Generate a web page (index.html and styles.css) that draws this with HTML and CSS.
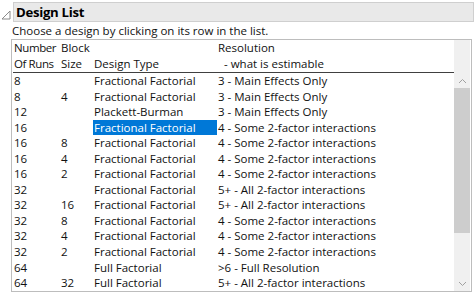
FILE: index.html
```html
<!DOCTYPE html>
<html>
<head>
<meta charset="utf-8">
<link rel="stylesheet" href="styles.css">
</head>
<body>
<div class="panel">
  <div class="outline">
    <svg class="tri" width="10" height="10" viewBox="0 0 10 10"><path d="M9 1 L9 9 L1 9 Z" fill="none" stroke="#8a8a8a" stroke-width="1"/></svg>
    <div class="titlebar">Design List</div>
  </div>
  <div class="content">
    <div class="hint">Choose a design by clicking on its row in the list.</div>
    <div class="listbox">
      <div class="table">
        <div class="head">
          <div class="row h">
            <span class="c1">Number</span><span class="c2">Block</span><span class="c3"></span><span class="c4">Resolution</span>
          </div>
          <div class="row h">
            <span class="c1">Of Runs</span><span class="c2">Size</span><span class="c3">Design Type</span><span class="c4">&nbsp;&nbsp;- what is estimable</span>
          </div>
        </div>
        <div class="body">
          <div class="row"><span class="c1">8</span><span class="c2"></span><span class="c3">Fractional Factorial</span><span class="c4">3 - Main Effects Only</span></div>
          <div class="row"><span class="c1">8</span><span class="c2">4</span><span class="c3">Fractional Factorial</span><span class="c4">3 - Main Effects Only</span></div>
          <div class="row"><span class="c1">12</span><span class="c2"></span><span class="c3">Plackett-Burman</span><span class="c4">3 - Main Effects Only</span></div>
          <div class="row"><span class="c1">16</span><span class="c2"></span><span class="c3 sel">Fractional Factorial</span><span class="c4">4 - Some 2-factor interactions</span></div>
          <div class="row"><span class="c1">16</span><span class="c2">8</span><span class="c3">Fractional Factorial</span><span class="c4">4 - Some 2-factor interactions</span></div>
          <div class="row"><span class="c1">16</span><span class="c2">4</span><span class="c3">Fractional Factorial</span><span class="c4">4 - Some 2-factor interactions</span></div>
          <div class="row"><span class="c1">16</span><span class="c2">2</span><span class="c3">Fractional Factorial</span><span class="c4">4 - Some 2-factor interactions</span></div>
          <div class="row"><span class="c1">32</span><span class="c2"></span><span class="c3">Fractional Factorial</span><span class="c4">5+ - All 2-factor interactions</span></div>
          <div class="row"><span class="c1">32</span><span class="c2">16</span><span class="c3">Fractional Factorial</span><span class="c4">5+ - All 2-factor interactions</span></div>
          <div class="row"><span class="c1">32</span><span class="c2">8</span><span class="c3">Fractional Factorial</span><span class="c4">4 - Some 2-factor interactions</span></div>
          <div class="row"><span class="c1">32</span><span class="c2">4</span><span class="c3">Fractional Factorial</span><span class="c4">4 - Some 2-factor interactions</span></div>
          <div class="row"><span class="c1">32</span><span class="c2">2</span><span class="c3">Fractional Factorial</span><span class="c4">4 - Some 2-factor interactions</span></div>
          <div class="row"><span class="c1">64</span><span class="c2"></span><span class="c3">Full Factorial</span><span class="c4">&gt;6 - Full Resolution</span></div>
          <div class="row"><span class="c1">64</span><span class="c2">32</span><span class="c3">Full Factorial</span><span class="c4">5+ - All 2-factor interactions</span></div>
        </div>
      </div>
      <div class="scrollbar">
        <div class="spacer"></div>
        <div class="arrow">
          <svg width="9" height="6" viewBox="0 0 9 6"><path d="M1 5 L4.5 1.5 L8 5" fill="none" stroke="#a0a0a0" stroke-width="1"/></svg>
        </div>
        <div class="thumb"></div>
        <div class="track"></div>
        <div class="arrow">
          <svg width="9" height="6" viewBox="0 0 9 6"><path d="M1 1 L4.5 4.5 L8 1" fill="none" stroke="#a0a0a0" stroke-width="1"/></svg>
        </div>
      </div>
    </div>
  </div>
</div>
</body>
</html>
```
FILE: styles.css
```css
html, body {
  margin: 0;
  padding: 0;
  background: #ffffff;
}
body {
  width: 474px;
  height: 293px;
  overflow: hidden;
  font-family: "Open Sans", "Noto Sans", sans-serif;
  font-size: 11.5px;
  color: #111;
}
.panel {
  padding-top: 2px;
}
.outline {
  display: flex;
  align-items: flex-end;
}
.tri {
  width: 10px;
  height: 10px;
  margin: 0 2px 2px 1px;
  flex: none;
}
.titlebar {
  width: 458px;
  height: 18px;
  border: 1px solid #cfcfcf;
  background: #e9e9e9;
  font-weight: bold;
  font-size: 13.2px;
  letter-spacing: -0.3px;
  line-height: 18px;
  padding-left: 2px;
  box-sizing: content-box;
  color: #000;
}
.content {
  padding-left: 11px;
}
.hint {
  height: 17px;
  line-height: 17px;
  padding-left: 1px;
}
.listbox {
  width: 459px;
  height: 251px;
  border: 1px solid #bdbdbd;
  display: flex;
  background: #fff;
}
.table {
  flex: 1;
  padding-left: 1px;
}
.head {
  border-bottom: 1px solid #404040;
}
.head .c1 {
  letter-spacing: -0.4px;
}
.row {
  display: flex;
  height: 15.55px;
  line-height: 15.55px;
  white-space: nowrap;
}
.row.h {
  height: 16px;
  line-height: 16px;
}
.c1 { width: 47px; padding-left: 1px; }
.c2 { width: 32px; }
.c3 { width: 123px; padding-left: 1px; }
.c4 { padding-left: 1px; }
.c3.sel {
  background: #0078d7;
  color: #fff;
}
.scrollbar {
  width: 16px;
  background: #f0f0f0;
  display: flex;
  flex-direction: column;
  margin-right: 1px;
}
.spacer {
  height: 33px;
}
.arrow {
  height: 15px;
  display: flex;
  align-items: center;
  justify-content: center;
}
.thumb {
  height: 145px;
  background: #cdcdcd;
}
.track {
  flex: 1;
}
```
